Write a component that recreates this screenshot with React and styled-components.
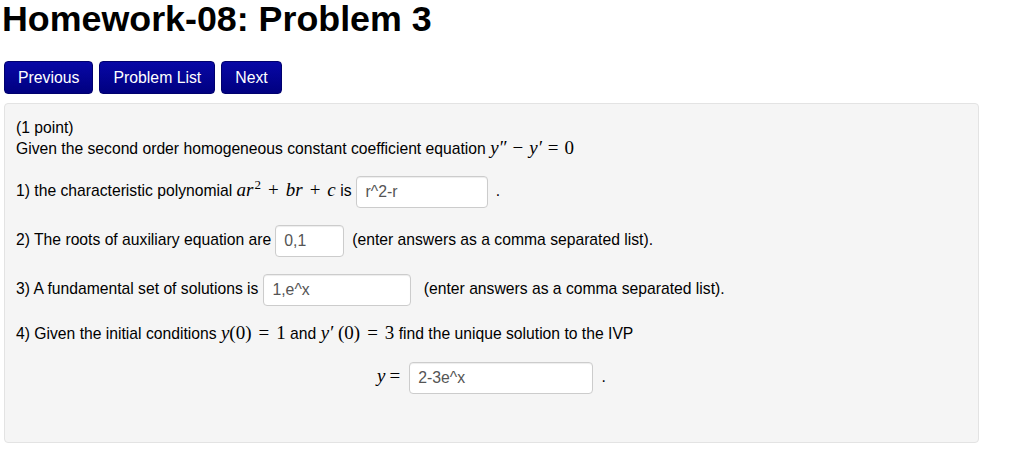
import React from 'react';
import styled, { createGlobalStyle } from 'styled-components';

const GlobalStyle = createGlobalStyle`
    body {
        margin: 0;
        background: #fff;
        font-family: "Liberation Sans", Arial, sans-serif;
        color: #000;
    }
`;

const Page = styled.div`
    padding: 0 45px 0 4px;
`;

const Title = styled.h1`
    font-size: 35.8px;
    font-weight: bold;
    line-height: 38px;
    margin: 0 0 0 -2px;
`;

const Nav = styled.div`
    display: flex;
    gap: 6px;
    margin-top: 23px;
`;

const NavButton = styled.button`
    height: 33px;
    padding: 0 13px;
    font-family: "Liberation Sans", Arial, sans-serif;
    font-size: 15.8px;
    color: #fff;
    background: linear-gradient(#0808a6, #000080);
    border: 1px solid #00006e;
    border-radius: 4px;
    cursor: pointer;
`;

const Panel = styled.div`
    margin-top: 9px;
    background: #f5f5f5;
    border: 1px solid #e3e3e3;
    border-radius: 4px;
    padding: 14px 11px 49px;
    font-size: 15.7px;
    line-height: 20px;
`;

const Line = styled.div`
    height: 20px;
`;

const Row = styled.div`
    line-height: 32px;
    height: 32px;
    margin-top: ${p => p.gap || 17}px;
    text-align: ${p => (p.center ? 'center' : 'left')};
    white-space: nowrap;
`;

const TextRow = styled.div`
    margin-top: 18px;
    line-height: 20px;
    height: 20px;
`;

const Answer = styled.span`
    display: inline-block;
    vertical-align: middle;
    box-sizing: border-box;
    width: ${p => p.w}px;
    height: 32px;
    line-height: 30px;
    margin: 0 ${p => p.mr ?? 8}px 0 ${p => p.ml ?? 5}px;
    padding: 0 8px;
    background: #fff;
    border: 1px solid #cccccc;
    border-radius: 4px;
    box-shadow: inset 0 1px 1px rgba(0, 0, 0, 0.075);
    color: #555;
    font-size: 15.8px;
    text-align: left;
`;

const M = styled.span`
    font-family: "Liberation Serif", "Times New Roman", serif;
    font-size: 19px;
    line-height: 1;
    font-style: ${p => (p.up ? 'normal' : 'italic')};
`;

const Op = styled.span`
    font-family: "Liberation Serif", "Times New Roman", serif;
    font-size: 19px;
    line-height: 1;
    margin: 0 ${p => p.s || 5}px;
`;

const Sup = styled.sup`
    font-size: 13px;
    font-family: "Liberation Serif", serif;
    vertical-align: 7px;
    line-height: 0;
    margin-left: 1px;
`;

const App = () => {
    return (
        <Page>
            <GlobalStyle />
            <Title>Homework-08: Problem 3</Title>
            <Nav>
                <NavButton>Previous</NavButton>
                <NavButton>Problem List</NavButton>
                <NavButton>Next</NavButton>
            </Nav>
            <Panel>
                <Line>(1 point)</Line>
                <Line>
                    Given the second order homogeneous constant coefficient equation{' '}
                    <M>y″</M><Op s={6}>−</Op><M>y′</M><Op s={6}>=</Op><M up>0</M>
                </Line>
                <Row>
                    1) the characteristic polynomial <M>ar</M><Sup>2</Sup><Op s={7}>+</Op><M>br</M><Op s={7}>+</Op><M>c</M> is
                    <Answer w={132} mr={3}>r^2-r</Answer>
                    <span>&nbsp;.</span>
                </Row>
                <Row>
                    2) The roots of auxiliary equation are
                    <Answer w={69} ml={4}>0,1</Answer>
                    (enter answers as a comma separated list).
                </Row>
                <Row>
                    3) A fundamental set of solutions is
                    <Answer w={148}>1,e^x</Answer>
                    &nbsp;(enter answers as a comma separated list).
                </Row>
                <TextRow>
                    4) Given the initial conditions <M>y</M><M up>(0)</M><Op s={7}>=</Op><M up>1</M> and <M>y′</M><M up>&nbsp;(0)</M><Op s={7}>=</Op><M up>3</M> find the unique solution to the IVP
                </TextRow>
                <Row gap={18} center>
                    <M>y</M><Op s={4}>=</Op>
                    <Answer w={184} mr={4}>2-3e^x</Answer>
                    <span>&nbsp;.</span>
                </Row>
            </Panel>
        </Page>
    );
};

export default App;
